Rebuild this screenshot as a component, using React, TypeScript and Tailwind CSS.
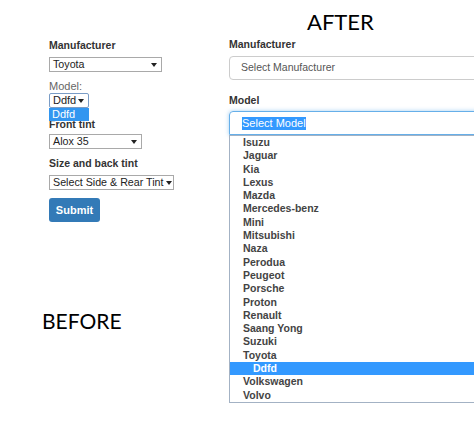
const makes = [
  'Isuzu',
  'Jaguar',
  'Kia',
  'Lexus',
  'Mazda',
  'Mercedes-benz',
  'Mini',
  'Mitsubishi',
  'Naza',
  'Perodua',
  'Peugeot',
  'Porsche',
  'Proton',
  'Renault',
  'Saang Yong',
  'Suzuki',
  'Toyota',
  'Ddfd',
  'Volkswagen',
  'Volvo',
];

const Arrow = () => (
  <svg width="6" height="4" viewBox="0 0 6 4" className="shrink-0">
    <path d="M0 0h6L3 4z" fill="#222" />
  </svg>
);

interface NativeSelectProps {
  value: string;
  width: string;
}

const NativeSelect = ({ value, width }: NativeSelectProps) => (
  <div
    className={`${width} h-[15px] flex items-center justify-between gap-[2px] border border-[#a9a9a9] bg-white pl-[3px] pr-[4px] text-[10.7px] leading-[13px] text-[#222] whitespace-nowrap`}
  >
    <span>{value}</span>
    <Arrow />
  </div>
);

const Before = () => (
  <div className="w-[229px] shrink-0 pl-[49px] pt-[39px] font-['Liberation_Sans',Arial,sans-serif]">
    <p className="h-[13px] leading-[13px] text-[10.5px] font-bold text-[#333]">Manufacturer</p>
    <div className="mt-[5px]">
      <NativeSelect value="Toyota" width="w-[113px]" />
    </div>

    <p className="mt-[8px] h-[13px] leading-[13px] text-[11px] text-[#666]">Model:</p>
    <div className="relative">
      <div className="w-[40px] h-[15px] flex items-center justify-between border border-[#7a9cc6] rounded-[2px] bg-white pl-[3px] pr-[4px] text-[11px] leading-[13px] text-[#222]">
        <span>Ddfd</span>
        <Arrow />
      </div>
      {/* open native dropdown covering the next label */}
      <div className="absolute left-0 top-[15px] z-10 w-[40px] h-[13px] bg-[#3296f0] pl-[3px] text-[11px] leading-[13px] text-white">
        Ddfd
      </div>
    </div>

    <p className="mt-[10px] h-[13px] leading-[13px] text-[10.5px] font-bold text-[#333]">Front tint</p>
    <div className="mt-[3px]">
      <NativeSelect value="Alox 35" width="w-[93px]" />
    </div>

    <p className="mt-[8px] h-[13px] leading-[13px] text-[10.5px] font-bold text-[#333]">Size and back tint</p>
    <div className="mt-[5px]">
      <NativeSelect value="Select Side & Rear Tint" width="w-[125px]" />
    </div>

    <button className="mt-[8px] w-[51px] h-[24px] rounded-[3px] bg-[#337ab7] text-[11px] font-bold text-white">
      Submit
    </button>
  </div>
);

const After = () => (
  <div className="w-[260px] shrink-0 font-['Liberation_Sans',Arial,sans-serif]">
    <p className="mt-[11px] h-[22px] pl-[78px] leading-[22px] text-[22px] text-black font-['Lato',sans-serif]">
      AFTER
    </p>
    <p className="mt-[5px] h-[13px] leading-[13px] text-[10.5px] font-bold text-[#333]">Manufacturer</p>
    <div className="mt-[5px] h-[24px] flex items-center rounded-[4px] border border-[#ccc] pl-[11px] text-[10.5px] text-[#555]">
      Select Manufacturer
    </div>

    <p className="mt-[14px] h-[13px] leading-[13px] text-[10.5px] font-bold text-[#333]">Model</p>
    <div className="mt-[4px] h-[24px] flex items-center rounded-t-[4px] border border-[#66afe9] shadow-[0_0_4px_rgba(102,175,233,0.6)] pl-[12px] text-[11px] text-[#555]">
      <span className="bg-[#3399ff] text-white leading-[13px]">Select Model</span>
    </div>

    <ul className="border border-[#a3b2c4] bg-white">
      {makes.map(make => (
        <li
          key={make}
          className={
            make === 'Ddfd'
              ? 'h-[13.3px] leading-[13.3px] pl-[23px] text-[10.5px] font-bold bg-[#3399ff] text-white'
              : 'h-[13.3px] leading-[13.3px] pl-[13px] text-[10.5px] font-bold text-[#444]'
          }
        >
          {make}
        </li>
      ))}
    </ul>
  </div>
);

export default function App() {
  return (
    <div className="relative w-[474px] h-[424px] overflow-hidden bg-white">
      <div className="flex">
        <div className="flex flex-col">
          <Before />
          <p className="mt-[88px] pl-[42px] h-[21px] leading-[21px] text-[21px] text-black font-['Lato',sans-serif]">
            BEFORE
          </p>
        </div>
        <After />
      </div>
    </div>
  );
}
